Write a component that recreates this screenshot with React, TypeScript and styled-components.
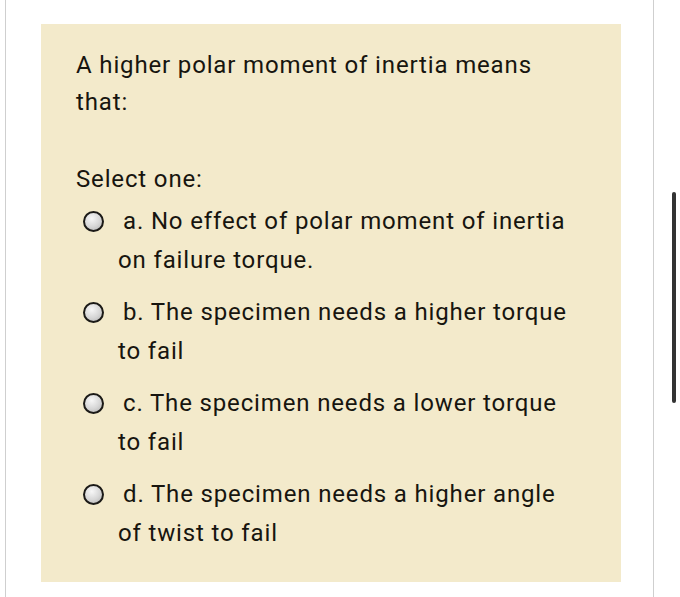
import styled, { createGlobalStyle } from 'styled-components'

const GlobalStyle = createGlobalStyle`
  html, body {
    margin: 0;
    padding: 0;
    background: #fff;
  }
  body {
    font-family: Roboto, "Liberation Sans", Arial, sans-serif;
    color: #17150f;
  }
`

const options = [
  { letter: 'a', text: 'No effect of polar moment of inertia on failure torque.' },
  { letter: 'b', text: 'The specimen needs a higher torque to fail' },
  { letter: 'c', text: 'The specimen needs a lower torque to fail' },
  { letter: 'd', text: 'The specimen needs a higher angle of twist to fail' },
]

const App = () => {
  return (
    <>
      <GlobalStyle />
      <Page>
        <Frame>
          <QuestionCard>
            <QuestionText>A higher polar moment of inertia means that:</QuestionText>
            <Prompt>Select one:</Prompt>
            <AnswerList>
              {options.map(opt => (
                <Answer key={opt.letter}>
                  <Radio />
                  <AnswerLabel>{`${opt.letter}. ${opt.text}`}</AnswerLabel>
                </Answer>
              ))}
            </AnswerList>
          </QuestionCard>
        </Frame>
        <ScrollGutter>
          <ScrollThumb />
        </ScrollGutter>
      </Page>
    </>
  )
}

const Page = styled.div`
  display: flex;
  width: 680px;
  height: 597px;
  overflow: hidden;
`

const Frame = styled.div`
  margin-left: 5px;
  width: 649px;
  height: 100%;
  box-sizing: border-box;
  border-left: 1px solid #cfcfcf;
  border-right: 1px solid #cfcfcf;
  padding: 24px 33px 0 35px;
`

const QuestionCard = styled.div`
  width: 580px;
  height: 558px;
  box-sizing: border-box;
  background: #f3eacb;
  padding: 23px 30px 0 35px;
  font-size: 24px;
  letter-spacing: 0.85px;
`

const QuestionText = styled.p`
  margin: 0;
  line-height: 37px;
  width: 485px;
`

const Prompt = styled.p`
  margin: 40px 0 0;
  line-height: 37px;
`

const AnswerList = styled.div`
  display: flex;
  flex-direction: column;
  gap: 13px;
  margin-top: 4px;
`

const Answer = styled.div`
  display: flex;
  align-items: flex-start;
  padding-left: 7px;
`

const Radio = styled.span`
  flex: none;
  width: 21px;
  height: 21px;
  margin-top: 9px;
  margin-right: 14px;
  box-sizing: border-box;
  border: 2px solid #1b1a17;
  border-radius: 50%;
  background: radial-gradient(circle at 40% 32%, #f7f7f7 0%, #d6d6d6 55%, #aeaeae 100%);
`

const AnswerLabel = styled.div`
  line-height: 39px;
  text-indent: 5px;
  width: 458px;
`

const ScrollGutter = styled.div`
  flex: 1;
  display: flex;
  justify-content: flex-end;
  padding-right: 4px;
`

const ScrollThumb = styled.div`
  width: 4px;
  height: 211px;
  margin-top: 192px;
  border-radius: 2px;
  background: #333;
`

export default App
